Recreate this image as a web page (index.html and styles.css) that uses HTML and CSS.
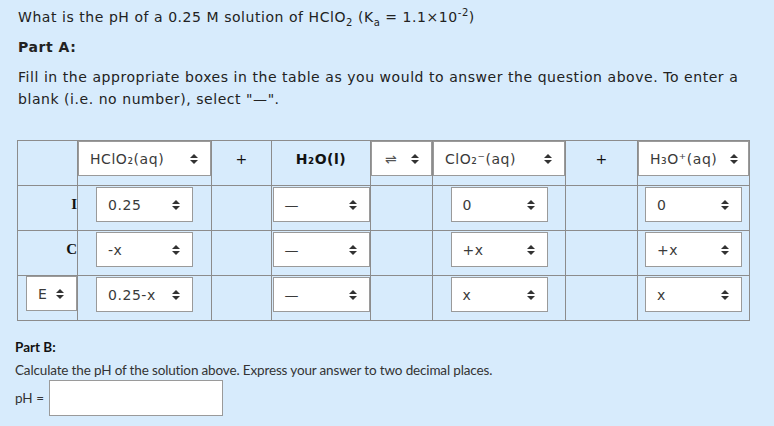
FILE: index.html
```html
<!DOCTYPE html>
<html>
<head>
<meta charset="utf-8">
<link rel="stylesheet" href="styles.css">
</head>
<body>
<div class="top">
  <p class="q">What is the pH of a 0.25 M solution of HClO<sub>2</sub> (K<sub>a</sub> = 1.1×10<sup>-2</sup>)</p>
  <p class="part">Part A:</p>
  <p class="instr">Fill in the appropriate boxes in the table as you would to answer the question above. To enter a<br>blank (i.e. no number), select "—".</p>
</div>

<div class="ice">
  <div class="cell"></div>
  <div class="cell"><div class="sel full"><span>HClO₂(aq)</span><svg class="arr" viewBox="0 0 8 10"><path d="M4 0L8 4H0Z M0 6H8L4 10Z"/></svg></div></div>
  <div class="cell hd">+</div>
  <div class="cell hd b">H₂O(l)</div>
  <div class="cell"><div class="sel full eq"><span>⇌</span><svg class="arr" viewBox="0 0 8 10"><path d="M4 0L8 4H0Z M0 6H8L4 10Z"/></svg></div></div>
  <div class="cell"><div class="sel full"><span>ClO₂⁻(aq)</span><svg class="arr" viewBox="0 0 8 10"><path d="M4 0L8 4H0Z M0 6H8L4 10Z"/></svg></div></div>
  <div class="cell hd">+</div>
  <div class="cell"><div class="sel full h3o"><span>H₃O⁺(aq)</span><svg class="arr" viewBox="0 0 8 10"><path d="M4 0L8 4H0Z M0 6H8L4 10Z"/></svg></div></div>

  <div class="cell lab">I</div>
  <div class="cell"><div class="sel"><span>0.25</span><svg class="arr" viewBox="0 0 8 10"><path d="M4 0L8 4H0Z M0 6H8L4 10Z"/></svg></div></div>
  <div class="cell"></div>
  <div class="cell"><div class="sel"><span>—</span><svg class="arr" viewBox="0 0 8 10"><path d="M4 0L8 4H0Z M0 6H8L4 10Z"/></svg></div></div>
  <div class="cell"></div>
  <div class="cell"><div class="sel"><span>0</span><svg class="arr" viewBox="0 0 8 10"><path d="M4 0L8 4H0Z M0 6H8L4 10Z"/></svg></div></div>
  <div class="cell"></div>
  <div class="cell"><div class="sel"><span>0</span><svg class="arr" viewBox="0 0 8 10"><path d="M4 0L8 4H0Z M0 6H8L4 10Z"/></svg></div></div>

  <div class="cell lab">C</div>
  <div class="cell"><div class="sel"><span>-x</span><svg class="arr" viewBox="0 0 8 10"><path d="M4 0L8 4H0Z M0 6H8L4 10Z"/></svg></div></div>
  <div class="cell"></div>
  <div class="cell"><div class="sel"><span>—</span><svg class="arr" viewBox="0 0 8 10"><path d="M4 0L8 4H0Z M0 6H8L4 10Z"/></svg></div></div>
  <div class="cell"></div>
  <div class="cell"><div class="sel"><span>+x</span><svg class="arr" viewBox="0 0 8 10"><path d="M4 0L8 4H0Z M0 6H8L4 10Z"/></svg></div></div>
  <div class="cell"></div>
  <div class="cell"><div class="sel"><span>+x</span><svg class="arr" viewBox="0 0 8 10"><path d="M4 0L8 4H0Z M0 6H8L4 10Z"/></svg></div></div>

  <div class="cell right"><div class="sel e"><span>E</span><svg class="arr" viewBox="0 0 8 10"><path d="M4 0L8 4H0Z M0 6H8L4 10Z"/></svg></div></div>
  <div class="cell"><div class="sel"><span>0.25-x</span><svg class="arr" viewBox="0 0 8 10"><path d="M4 0L8 4H0Z M0 6H8L4 10Z"/></svg></div></div>
  <div class="cell"></div>
  <div class="cell"><div class="sel"><span>—</span><svg class="arr" viewBox="0 0 8 10"><path d="M4 0L8 4H0Z M0 6H8L4 10Z"/></svg></div></div>
  <div class="cell"></div>
  <div class="cell"><div class="sel"><span>x</span><svg class="arr" viewBox="0 0 8 10"><path d="M4 0L8 4H0Z M0 6H8L4 10Z"/></svg></div></div>
  <div class="cell"></div>
  <div class="cell"><div class="sel"><span>x</span><svg class="arr" viewBox="0 0 8 10"><path d="M4 0L8 4H0Z M0 6H8L4 10Z"/></svg></div></div>
</div>

<div class="partb">
  <p class="pbh">Part B:</p>
  <p class="pbt">Calculate the pH of the solution above. Express your answer to two decimal places.</p>
  <div class="ph"><span>pH =</span><div class="inp"></div></div>
</div>
</body>
</html>
```
FILE: styles.css
```css
body {
  margin: 0;
  background: #d7ebfc;
  font-family: "DejaVu Sans", Verdana, sans-serif;
  font-size: 14px;
  color: #222;
}
.top {
  padding: 6px 0 0 18px;
  letter-spacing: 0.55px;
}
.top p {
  margin: 0;
  line-height: 22px;
  white-space: nowrap;
}
.top .part,
.top .instr {
  margin-top: 8px;
}
.part {
  font-weight: bold;
}
sub, sup {
  font-size: 10px;
  line-height: 0;
}
.ice {
  display: grid;
  grid-template-columns: 59px 133px 59px 98px 61px 132px 71px 111px;
  grid-auto-rows: 44px;
  gap: 1px;
  background: #8c8c8c;
  border: 1px solid #8c8c8c;
  width: max-content;
  margin: 30px 0 0 17px;
}
.cell {
  background: #d7ebfc;
  display: flex;
  justify-content: center;
  align-items: flex-start;
}
.cell.right {
  justify-content: flex-end;
}
.hd {
  line-height: 37px;
  color: #111;
  letter-spacing: 0.5px;
}
.hd.b {
  font-weight: bold;
}
.lab {
  justify-content: flex-end;
  font-family: "Liberation Serif", "Times New Roman", serif;
  font-weight: bold;
  font-size: 15px;
  line-height: 35px;
  padding-top: 1px;
  color: #111;
}
.sel {
  box-sizing: border-box;
  width: 97px;
  height: 35px;
  margin-top: 1px;
  background: #fff;
  border: 1px solid #9a9a9a;
  display: flex;
  align-items: center;
  justify-content: space-between;
  padding: 0 12px 0 11px;
  color: #3a3a3a;
  white-space: nowrap;
  letter-spacing: 0.55px;
}
.sel.full {
  width: 100%;
  margin-top: 0;
}
.sel.e {
  width: 51px;
  margin-top: 0;
}
.sel.eq span {
  color: #555;
  padding-left: 2px;
}
.sel.h3o {
  padding-right: 10px;
}
.arr {
  width: 8px;
  height: 10px;
  flex: none;
  fill: #333;
}
.partb {
  padding: 0 0 0 15px;
  font-family: Lato, "Open Sans", sans-serif;
  font-size: 13.5px;
  color: #333;
}
.partb p {
  margin: 0;
  line-height: 20px;
}
.pbh {
  margin-top: 16px !important;
  font-weight: bold;
  color: #111;
}
.pbt {
  margin-top: 3px !important;
  letter-spacing: -0.15px;
}
.ph {
  display: flex;
  align-items: center;
  gap: 5px;
  margin-top: 0;
}
.inp {
  box-sizing: border-box;
  width: 174px;
  height: 36px;
  background: #fff;
  border: 1px solid #9a9a9a;
}
```
